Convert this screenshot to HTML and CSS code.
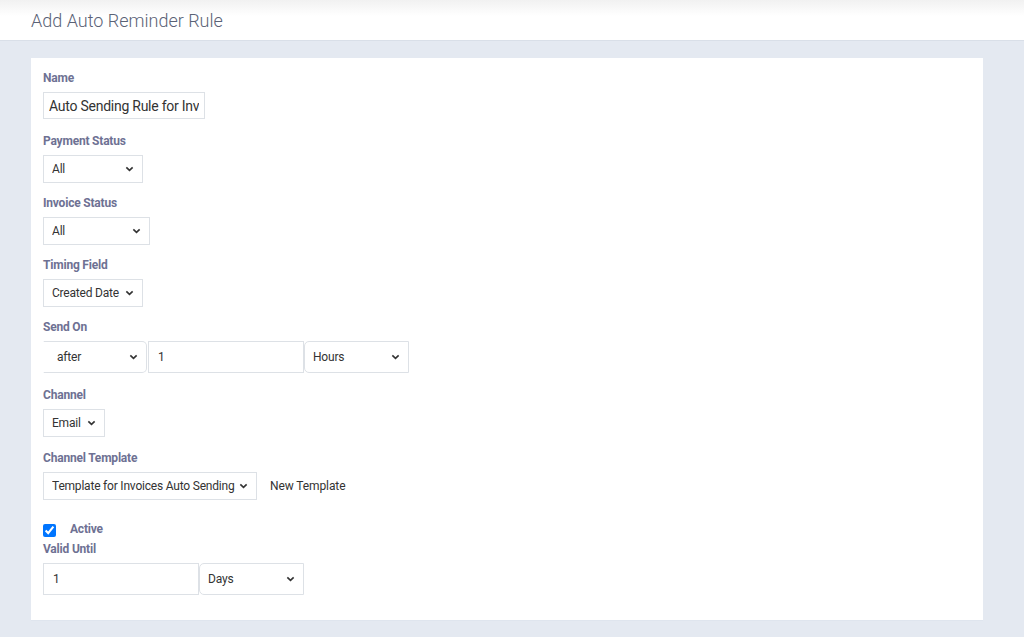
FILE: index.html
```html
<!DOCTYPE html>
<html lang="en">
<head>
<meta charset="UTF-8">
<meta name="viewport" content="width=device-width, initial-scale=1.0">
<title>Add Auto Reminder Rule</title>
    <link rel="stylesheet" href="styles.css">
</head>
<body>
    <header class="page-header">
        <h1>Add Auto Reminder Rule</h1>
    </header>
    <main class="content">
        <div class="card">
            <form class="rule-form">
                <!-- name -->
                <div class="field name">
                    <label class="field-label">Name</label>
                    <input class="text-input name-input" type="text" value="Auto Sending Rule for Invoices">
                </div>

                <!-- payment status -->
                <div class="field">
                    <label class="field-label">Payment Status</label>
                    <div class="select w-100">
                        <select><option>All</option></select>
                        <svg class="chev" viewBox="0 0 10 6"><path d="M1.5 1.2 L5 4.6 L8.5 1.2"/></svg>
                    </div>
                </div>

                <!-- invoice status -->
                <div class="field">
                    <label class="field-label">Invoice Status</label>
                    <div class="select w-107">
                        <select><option>All</option></select>
                        <svg class="chev" viewBox="0 0 10 6"><path d="M1.5 1.2 L5 4.6 L8.5 1.2"/></svg>
                    </div>
                </div>

                <!-- timing field -->
                <div class="field">
                    <label class="field-label">Timing Field</label>
                    <div class="select w-100">
                        <select><option>Created Date</option></select>
                        <svg class="chev" viewBox="0 0 10 6"><path d="M1.5 1.2 L5 4.6 L8.5 1.2"/></svg>
                    </div>
                </div>

                <!-- send on -->
                <div class="field send-on">
                    <label class="field-label">Send On</label>
                    <div class="input-group">
                        <div class="select group-first w-104">
                            <select><option>after</option></select>
                            <svg class="chev" viewBox="0 0 10 6"><path d="M1.5 1.2 L5 4.6 L8.5 1.2"/></svg>
                        </div>
                        <input class="text-input group-input w-156" type="text" value="1">
                        <div class="select group-last w-105">
                            <select><option>Hours</option></select>
                            <svg class="chev" viewBox="0 0 10 6"><path d="M1.5 1.2 L5 4.6 L8.5 1.2"/></svg>
                        </div>
                    </div>
                </div>

                <!-- channel -->
                <div class="field channel">
                    <label class="field-label">Channel</label>
                    <div class="select w-62">
                        <select><option>Email</option></select>
                        <svg class="chev" viewBox="0 0 10 6"><path d="M1.5 1.2 L5 4.6 L8.5 1.2"/></svg>
                    </div>
                </div>

                <!-- channel template -->
                <div class="field">
                    <label class="field-label">Channel Template</label>
                    <div class="template-row">
                        <div class="select w-214">
                            <select><option>Template for Invoices Auto Sending</option></select>
                            <svg class="chev" viewBox="0 0 10 6"><path d="M1.5 1.2 L5 4.6 L8.5 1.2"/></svg>
                        </div>
                        <span class="new-template">New Template</span>
                    </div>
                </div>

                <!-- active -->
                <div class="check-row">
                    <input type="checkbox" id="active" checked>
                    <label for="active" class="field-label">Active</label>
                </div>

                <!-- valid until -->
                <div class="field last">
                    <label class="field-label">Valid Until</label>
                    <div class="input-group">
                        <input class="text-input group-input w-156 first-input" type="text" value="1">
                        <div class="select group-last w-105">
                            <select><option>Days</option></select>
                            <svg class="chev" viewBox="0 0 10 6"><path d="M1.5 1.2 L5 4.6 L8.5 1.2"/></svg>
                        </div>
                    </div>
                </div>
            </form>
        </div>
    </main>
</body>
</html>
```

FILE: styles.css
```css
html, body{
    margin: 0;
    height: 100%;
}
body{
    background-color: #e4e9f1;
    font-family: Roboto, "Liberation Sans", sans-serif;
    color: #333333;
}
.page-header{
    height: 40px;
    display: flex;
    align-items: center;
    padding: 0 31px;
    background: linear-gradient(to bottom, #f1f1f1 0, #ffffff 16px, #ffffff 100%);
    border-bottom: 1px solid #d9dfe8;
}
.page-header h1{
    margin: 0;
    font-size: 18px;
    font-weight: 300;
    color: #5a6276;
}
.content{
    padding: 17px 41px 17px 31px;
}
.card{
    background-color: #ffffff;
    padding: 13px 12px 25px 12px;
    border-bottom: 1px solid #dfe5ee;
}
.field{
    margin-bottom: 13px;
}
.field.name{
    margin-bottom: 15px;
}
.field.send-on{
    margin-bottom: 15px;
}
.field.channel{
    margin-bottom: 14px;
}
.field.last{
    margin-bottom: 0;
}
.field-label{
    display: block;
    font-size: 12px;
    line-height: 15px;
    font-weight: 700;
    color: #6e7193;
    letter-spacing: -0.2px;
    margin-bottom: 6px;
}
.text-input{
    box-sizing: border-box;
    height: 28px;
    border: 1px solid #dde1e6;
    border-radius: 0;
    font-family: inherit;
    color: #333333;
    outline: none;
}
.name-input{
    display: block;
    width: 162px;
    height: 27px;
    font-size: 14px;
    letter-spacing: -0.25px;
    padding: 0 5px;
    margin-top: 1px;
}
.select{
    position: relative;
    display: inline-block;
    height: 28px;
}
.select select{
    -webkit-appearance: none;
    appearance: none;
    box-sizing: border-box;
    width: 100%;
    height: 100%;
    border: 1px solid #dde1e6;
    border-radius: 0;
    background-color: #ffffff;
    font-family: inherit;
    font-size: 12px;
    letter-spacing: -0.2px;
    color: #333333;
    padding: 0 20px 0 8px;
    outline: none;
}
.chev{
    position: absolute;
    right: 9px;
    top: 50%;
    width: 9px;
    height: 6px;
    margin-top: -3px;
    fill: none;
    stroke: #333333;
    stroke-width: 1.8;
    pointer-events: none;
}
.w-62{ width: 62px; }
.w-100{ width: 100px; }
.w-104{ width: 104px; }
.w-105{ width: 105px; }
.w-107{ width: 107px; }
.w-156{ width: 156px; }
.w-214{ width: 214px; }

/* input group (send on, valid until) */
.input-group{
    display: flex;
    align-items: stretch;
    height: 32px;
}
.input-group .select{
    height: 32px;
}
.group-first select{
    border-left-color: #ffffff;
    border-radius: 0 5px 5px 0;
    padding-left: 13px;
}
.group-last select{
    border-radius: 5px 0 0 5px;
    padding-left: 8px;
}
.group-input{
    height: 32px;
    font-size: 12px;
    padding: 0 9px;
    margin-left: 1px;
}
.group-input.first-input{
    margin-left: 0;
}

/* channel template row */
.template-row{
    display: flex;
    align-items: center;
}
.new-template{
    margin-left: 13px;
    font-size: 12px;
    letter-spacing: -0.1px;
    color: #333333;
}

/* active checkbox */
.check-row{
    display: flex;
    align-items: center;
    margin-top: 23px;
    margin-bottom: 4px;
}
.check-row input{
    width: 13px;
    height: 13px;
    margin: 0 14px 0 0;
}
.check-row .field-label{
    margin: 0;
    position: relative;
    top: -1px;
}
```
